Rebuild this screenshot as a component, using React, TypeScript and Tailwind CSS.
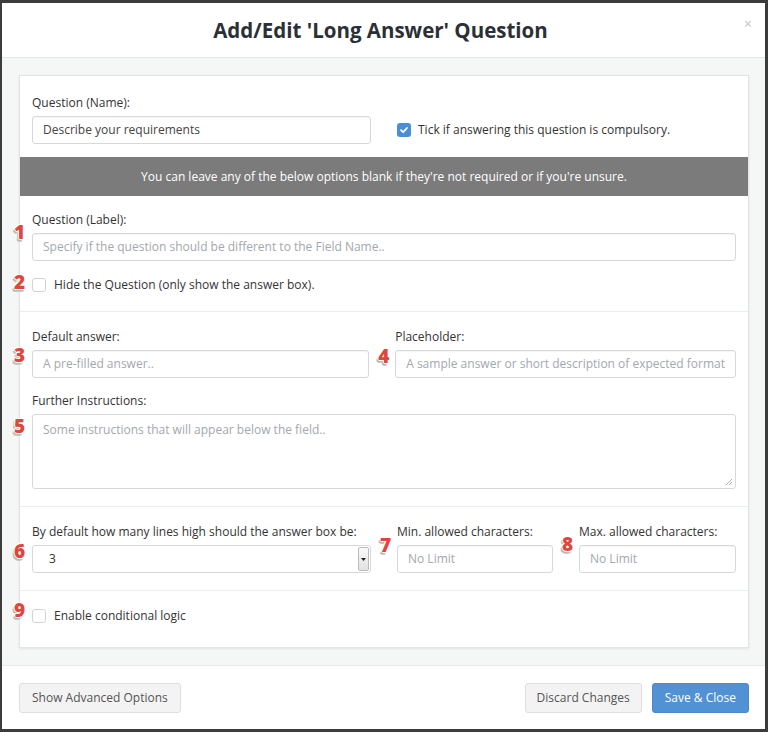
import React from 'react';

const font = { fontFamily: '"Open Sans", "Noto Sans", sans-serif' };

const Num: React.FC<{ n: number; className: string }> = ({ n, className }) => (
  <span
    className={`absolute text-[19px] font-extrabold leading-none text-[#e0473c] [text-shadow:1px_0_#fff,-1px_0_#fff,0_1px_#fff,0_-1px_#fff,1px_1px_#fff,-1px_-1px_#fff,-2px_2px_#b9b9b9,-1px_3px_#c9c9c9] ${className}`}
  >
    {n}
  </span>
);

const Label: React.FC<{ children: React.ReactNode }> = ({ children }) => (
  <div className="mb-[5px] text-[12px] leading-[16px] text-[#333]">{children}</div>
);

const Input: React.FC<{ placeholder?: string; value?: string }> = ({ placeholder, value }) => (
  <div className="flex h-[28px] items-center rounded-[3px] border border-[#d6d9dc] bg-white px-[10px] text-[12px] shadow-[inset_0_1px_1px_rgba(0,0,0,0.04)]">
    {value ? (
      <span className="text-[#444]">{value}</span>
    ) : (
      <span className="whitespace-nowrap text-[#a3a8ad]">{placeholder}</span>
    )}
  </div>
);

const Check: React.FC<{ checked?: boolean }> = ({ checked }) =>
  checked ? (
    <span className="flex h-[14px] w-[14px] items-center justify-center rounded-[3px] bg-[#4a8fd6]">
      <svg width="10" height="10" viewBox="0 0 10 10">
        <path d="M2 5.2 L4.2 7.2 L8 3" fill="none" stroke="#fff" strokeWidth="1.8" strokeLinecap="round" strokeLinejoin="round" />
      </svg>
    </span>
  ) : (
    <span className="h-[14px] w-[14px] rounded-[3px] border border-[#cfd3d6] bg-white" />
  );

export default function App() {
  return (
    <div style={font} className="h-[732px] w-[768px] bg-[#3c3c3c] pl-[2px] pr-[3px] pt-[3px] pb-[3px]">
      <div className="flex h-full flex-col bg-white">
        {/* header */}
        <div className="relative flex h-[55px] items-center justify-center border-b border-[#e3e6e6]">
          <h1 className="-ml-[6px] text-[20.5px] font-bold text-[#2b3036]">Add/Edit 'Long Answer' Question</h1>
          <span className="absolute right-[13px] top-[10px] text-[14px] text-[#c4c4c4]">×</span>
        </div>

        {/* body */}
        <div className="flex-1 bg-[#f5f7f7] pl-[17px] pr-[16px] pt-[17px]">
          <div className="border border-[#e1e5e5] bg-white shadow-[0_1px_2px_rgba(0,0,0,0.08)]">
            {/* name row */}
            <div className="flex gap-[26px] px-[12px] pt-[19px] pb-[13px]">
              <div className="w-[339px]">
                <Label>Question (Name):</Label>
                <Input value="Describe your requirements" />
              </div>
              <div className="flex flex-1 items-center gap-[7px] pt-[20px] text-[12px] text-[#333]">
                <Check checked />
                <span>Tick if answering this question is compulsory.</span>
              </div>
            </div>

            <div className="flex h-[39px] items-center justify-center bg-[#7b7b7b] text-[12px] text-white">
              You can leave any of the below options blank if they're not required or if you're unsure.
            </div>

            {/* label section */}
            <div className="px-[12px] pt-[16px] pb-[17px]">
              <Label>Question (Label):</Label>
              <div className="relative">
                <Num n={1} className="-left-[18px] -top-[10px]" />
                <Input placeholder="Specify if the question should be different to the Field Name.." />
              </div>
              <div className="relative mt-[15px] flex items-center gap-[8px] text-[12px] text-[#333]">
                <Num n={2} className="-left-[18px] -top-[3px]" />
                <Check />
                <span>Hide the Question (only show the answer box).</span>
              </div>
            </div>

            {/* default / placeholder */}
            <div className="border-t border-[#eceeee] px-[12px] pt-[17px] pb-[17px]">
              <div className="flex gap-[26px]">
                <div className="w-[339px]">
                  <Label>Default answer:</Label>
                  <div className="relative">
                    <Num n={3} className="-left-[18px] -top-[4px]" />
                    <Input placeholder="A pre-filled answer.." />
                  </div>
                </div>
                <div className="flex-1">
                  <Label>Placeholder:</Label>
                  <div className="relative">
                    <Num n={4} className="-left-[17px] -top-[3px]" />
                    <Input placeholder="A sample answer or short description of expected format" />
                  </div>
                </div>
              </div>
              <div className="mt-[15px]">
                <Label>Further Instructions:</Label>
                <div className="relative">
                  <Num n={5} className="-left-[18px] top-[3px]" />
                  <div className="relative h-[75px] rounded-[3px] border border-[#d6d9dc] bg-white px-[10px] pt-[6px] text-[12px] text-[#a3a8ad]">
                    Some instructions that will appear below the field..
                    <svg className="absolute bottom-[2px] right-[2px]" width="8" height="8" viewBox="0 0 8 8">
                      <path d="M7 1 L1 7 M7 4 L4 7 M7 6.5 L6.5 7" stroke="#9a9a9a" strokeWidth="0.8" />
                    </svg>
                  </div>
                </div>
              </div>
            </div>

            {/* lines / min / max */}
            <div className="flex gap-[26px] border-t border-[#eceeee] px-[12px] pt-[17px] pb-[17px]">
              <div className="w-[339px]">
                <Label>By default how many lines high should the answer box be:</Label>
                <div className="relative">
                  <Num n={6} className="-left-[18px] -top-[3px]" />
                  <div className="flex h-[28px] items-center rounded-[3px] border border-[#d6d9dc] bg-white text-[12px] text-[#333]">
                    <span className="flex-1 pl-[16px]">3</span>
                    <span className="mr-[1px] flex h-[24px] w-[11px] items-center justify-center rounded-[2px] border border-[#bbb] bg-gradient-to-b from-[#fafafa] to-[#e2e2e2]">
                      <svg width="5" height="3" viewBox="0 0 5 3">
                        <path d="M0 0 L5 0 L2.5 3 Z" fill="#222" />
                      </svg>
                    </span>
                  </div>
                </div>
              </div>
              <div className="w-[156px]">
                <Label>Min. allowed characters:</Label>
                <div className="relative">
                  <Num n={7} className="-left-[17px] -top-[9px]" />
                  <Input placeholder="No Limit" />
                </div>
              </div>
              <div className="flex-1">
                <Label>Max. allowed characters:</Label>
                <div className="relative">
                  <Num n={8} className="-left-[17px] -top-[10px]" />
                  <Input placeholder="No Limit" />
                </div>
              </div>
            </div>

            {/* conditional */}
            <div className="border-t border-[#eceeee] px-[12px] pt-[16px] pb-[22px]">
              <div className="relative flex items-center gap-[8px] text-[12px] text-[#333]">
                <Num n={9} className="-left-[18px] -top-[6px]" />
                <Check />
                <span>Enable conditional logic</span>
              </div>
            </div>
          </div>
        </div>

        {/* footer */}
        <div className="flex h-[64px] items-center justify-between border-t border-[#e6e9e9] bg-white pl-[17px] pr-[16px] text-[12px]">
          <button className="h-[30px] rounded-[3px] border border-[#dedede] bg-[#f3f3f3] px-[12px] text-[#555]">
            Show Advanced Options
          </button>
          <div className="flex gap-[10px]">
            <button className="h-[30px] rounded-[3px] border border-[#dedede] bg-[#f3f3f3] px-[11px] text-[#555]">
              Discard Changes
            </button>
            <button className="h-[30px] rounded-[3px] border border-[#4a88c8] bg-[#5192d4] px-[12px] text-white">
              Save &amp; Close
            </button>
          </div>
        </div>
      </div>
    </div>
  );
}
